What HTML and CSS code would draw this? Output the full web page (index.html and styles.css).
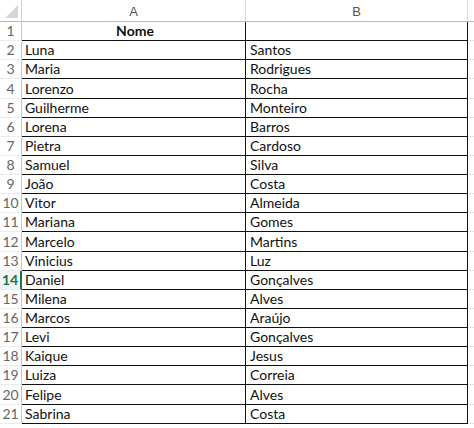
FILE: index.html
```html
<!DOCTYPE html>
<html lang="pt">
<head>
<meta charset="utf-8">
<link rel="stylesheet" href="styles.css">
</head>
<body>
<div class="sheet">
  <div class="corner"><span class="tri"></span></div>
  <div class="colhead">A</div>
  <div class="colhead">B</div>
  <div class="colhead stub"></div>

  <div class="rowhead">1</div><div class="cell a hdr">Nome</div><div class="cell b"></div><div class="stubcell"></div>
  <div class="rowhead">2</div><div class="cell a">Luna</div><div class="cell b">Santos</div><div class="stubcell"></div>
  <div class="rowhead">3</div><div class="cell a">Maria</div><div class="cell b">Rodrigues</div><div class="stubcell"></div>
  <div class="rowhead">4</div><div class="cell a">Lorenzo</div><div class="cell b">Rocha</div><div class="stubcell"></div>
  <div class="rowhead">5</div><div class="cell a">Guilherme</div><div class="cell b">Monteiro</div><div class="stubcell"></div>
  <div class="rowhead">6</div><div class="cell a">Lorena</div><div class="cell b">Barros</div><div class="stubcell"></div>
  <div class="rowhead">7</div><div class="cell a">Pietra</div><div class="cell b">Cardoso</div><div class="stubcell"></div>
  <div class="rowhead">8</div><div class="cell a">Samuel</div><div class="cell b">Silva</div><div class="stubcell"></div>
  <div class="rowhead">9</div><div class="cell a">João</div><div class="cell b">Costa</div><div class="stubcell"></div>
  <div class="rowhead">10</div><div class="cell a">Vitor</div><div class="cell b">Almeida</div><div class="stubcell"></div>
  <div class="rowhead">11</div><div class="cell a">Mariana</div><div class="cell b">Gomes</div><div class="stubcell"></div>
  <div class="rowhead">12</div><div class="cell a">Marcelo</div><div class="cell b">Martins</div><div class="stubcell"></div>
  <div class="rowhead">13</div><div class="cell a">Vinicius</div><div class="cell b">Luz</div><div class="stubcell"></div>
  <div class="rowhead sel">14</div><div class="cell a">Daniel</div><div class="cell b">Gonçalves</div><div class="stubcell"></div>
  <div class="rowhead">15</div><div class="cell a">Milena</div><div class="cell b">Alves</div><div class="stubcell"></div>
  <div class="rowhead">16</div><div class="cell a">Marcos</div><div class="cell b">Araújo</div><div class="stubcell"></div>
  <div class="rowhead">17</div><div class="cell a">Levi</div><div class="cell b">Gonçalves</div><div class="stubcell"></div>
  <div class="rowhead">18</div><div class="cell a">Kaique</div><div class="cell b">Jesus</div><div class="stubcell"></div>
  <div class="rowhead">19</div><div class="cell a">Luiza</div><div class="cell b">Correia</div><div class="stubcell"></div>
  <div class="rowhead">20</div><div class="cell a">Felipe</div><div class="cell b">Alves</div><div class="stubcell"></div>
  <div class="rowhead">21</div><div class="cell a">Sabrina</div><div class="cell b">Costa</div><div class="stubcell"></div>
</div>
</body>
</html>
```

FILE: styles.css
```css
* { box-sizing: border-box; }
html, body {
  margin: 0;
  padding: 0;
  background: #ffffff;
}
body {
  width: 474px;
  height: 428px;
  overflow: hidden;
  font-family: Lato, "Liberation Sans", sans-serif;
  font-size: 14px;
  color: #111;
}
.sheet {
  display: grid;
  grid-template-columns: 22px 224px 222px 6px;
  grid-template-rows: 22px repeat(21, 19.14px);
}
.corner {
  position: relative;
  border-right: 1px solid #d0d0d0;
  border-bottom: 1px solid #b8b8b8;
}
.tri {
  position: absolute;
  right: 3px;
  bottom: 3px;
  width: 0;
  height: 0;
  border-left: 13px solid transparent;
  border-bottom: 13px solid #d6d6d6;
}
.colhead {
  display: flex;
  align-items: center;
  justify-content: center;
  padding-top: 2px;
  color: #555;
  font-family: "Liberation Sans", sans-serif;
  font-size: 13px;
  border-right: 1px solid #dadada;
  border-bottom: 1px solid #b8b8b8;
}
.colhead.stub { border-right: none; }
.rowhead {
  display: flex;
  align-items: flex-end;
  justify-content: center;
  padding-bottom: 1px;
  color: #666;
  font-size: 14px;
  border-right: 1px solid #c8c8c8;
  border-bottom: 1px solid #ececec;
}
.rowhead.sel {
  color: #217346;
  font-weight: 700;
  background: #f3f3f3;
  border-right: 2px solid #217346;
}
.cell {
  display: flex;
  align-items: flex-end;
  padding: 0 0 1px 3px;
  white-space: nowrap;
  border-bottom: 1px solid #111;
  border-right: 1px solid #111;
}
.cell.b { padding-left: 4px; }
.cell.hdr {
  justify-content: center;
  font-weight: 700;
}
.stubcell {
  border-bottom: 1px solid #e4e4e4;
}
```
